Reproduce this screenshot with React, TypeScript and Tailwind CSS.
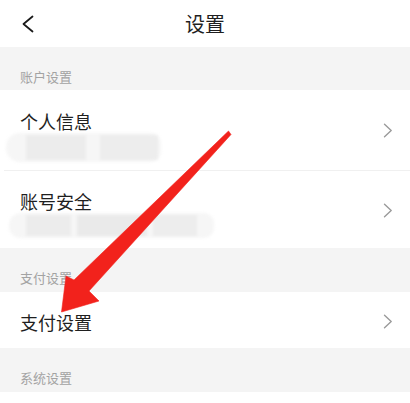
import React from "react";

const Chevron = () => (
  <svg width="10" height="15" viewBox="0 0 10 15" fill="none">
    <path d="M1.5 1.2 L8.2 7.5 L1.5 13.8" stroke="#9a9a9a" strokeWidth="1.4" strokeLinecap="round" strokeLinejoin="round" />
  </svg>
);

const SectionLabel = ({ text }: { text: string }) => (
  <div className="h-[44px] pt-[15px] pl-[20px] flex items-center text-[13px] text-[#a3a3a3] leading-none">
    {text}
  </div>
);

export default function App() {
  return (
    <div
      className="relative w-[410px] h-[403px] overflow-hidden bg-[#f4f4f4]"
      style={{ fontFamily: '"Noto Sans CJK SC", "Noto Sans", sans-serif' }}
    >
      {/* header */}
      <div className="h-[47px] bg-white grid grid-cols-[1fr_auto_1fr] items-center">
        <div className="pl-[21px] flex items-center">
          <svg width="14" height="18" viewBox="0 0 14 18" fill="none">
            <path d="M11.5 1.5 L2.5 9 L11.5 16.5" stroke="#1a1a1a" strokeWidth="1.8" strokeLinecap="round" strokeLinejoin="round" />
          </svg>
        </div>
        <div className="text-[20px] text-[#1f1f1f] leading-none pt-[1px]">设置</div>
        <div />
      </div>

      <div className="h-[43px] pt-[15px] pl-[20px] flex items-center text-[13px] text-[#a3a3a3] leading-none">账户设置</div>

      <div className="bg-white">
        <div className="h-[80px] flex justify-between pl-[20px] pr-[17px]">
          <div className="flex flex-col pt-[19px]">
            <div className="text-[18px] leading-[24px] text-[#1f1f1f]">个人信息</div>
            <div className="-ml-[14px] h-[29px] w-[155px] rounded-l-[14px] rounded-r-[10px] bg-[#f6f6f6] flex items-stretch gap-[14px] pl-[20px] py-[2px] blur-[1.5px]">
              <div className="w-[60px] bg-[#ececec]" />
              <div className="w-[58px] bg-[#ededed]" />
            </div>
          </div>
          <div className="self-center pt-[1px]">
            <Chevron />
          </div>
        </div>
        <div className="h-px bg-[#f0f0f0] ml-[4px]" />
        <div className="h-[77px] flex justify-between pl-[20px] pr-[17px]">
          <div className="flex flex-col pt-[18px]">
            <div className="text-[18px] leading-[24px] text-[#1f1f1f]">账号安全</div>
            <div className="-ml-[11px] h-[25px] w-[205px] rounded-l-[12px] rounded-r-[10px] bg-[#f6f6f6] flex items-stretch gap-[6px] pl-[17px] py-[2px] blur-[1.5px]">
              <div className="w-[45px] bg-[#ececec]" />
              <div className="w-[70px] bg-[#eaeaea]" />
              <div className="w-[44px] bg-[#ededed]" />
            </div>
          </div>
          <div className="self-center pt-[2px]">
            <Chevron />
          </div>
        </div>
      </div>

      <SectionLabel text="支付设置" />

      <div className="bg-white h-[56px] flex items-center justify-between pl-[20px] pr-[17px] pt-[3px]">
        <div className="text-[18px] leading-[24px] text-[#1f1f1f]">支付设置</div>
        <Chevron />
      </div>

      <SectionLabel text="系统设置" />

      <div className="bg-white h-[20px]" />

      {/* red annotation arrow */}
      <svg
        className="absolute inset-0 pointer-events-none"
        width="410"
        height="403"
        viewBox="0 0 410 403"
      >
        <polygon
          points="228.5,131 231,134.5 89,291 99,301 61.5,312 66,276 74,280"
          fill="#f2221c"
          stroke="#f2221c"
          strokeWidth="0.6"
          strokeLinejoin="round"
        />
      </svg>
    </div>
  );
}
